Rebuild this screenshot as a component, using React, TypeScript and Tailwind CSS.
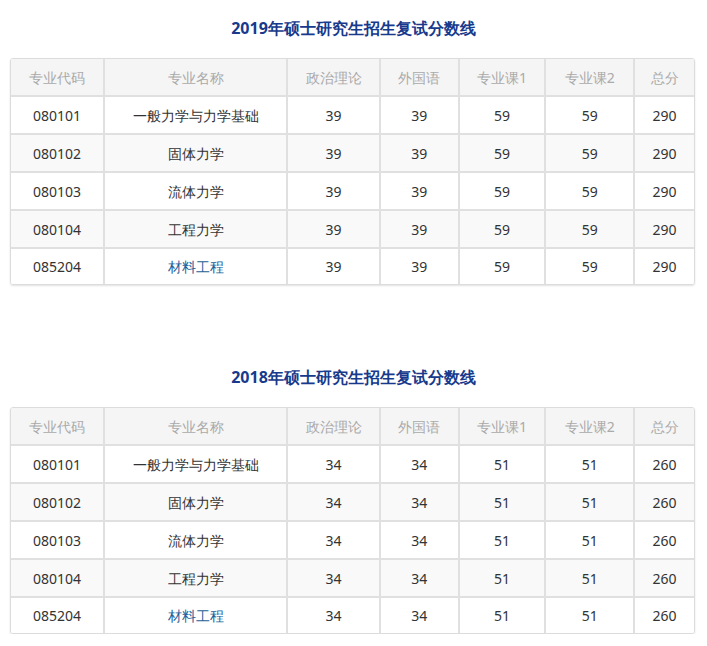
const cols = ["专业代码", "专业名称", "政治理论", "外国语", "专业课1", "专业课2", "总分"];
const widths = ["w-[93px]", "w-[184px]", "w-[93px]", "w-[79px]", "w-[87px]", "w-[89px]", "w-[60px]"];
const majors = [
  ["080101", "一般力学与力学基础"],
  ["080102", "固体力学"],
  ["080103", "流体力学"],
  ["080104", "工程力学"],
  ["085204", "材料工程"],
];

function ScoreTable({ title, s }: { title: string; s: string[] }) {
  return (
    <div>
      <h2 className="h-[58px] pt-[16px] text-center text-[16px] font-bold text-[#173a8c]">{title}</h2>
      <div className="ml-[10px] w-[685px] overflow-hidden rounded-[3px] border border-[#dcdcdc] shadow-[0_1px_2px_rgba(0,0,0,0.12)]">
        <table className="w-full border-collapse text-[14px]">
          <thead>
            <tr className="h-[37px] bg-[#f5f5f5] text-[#aaa]">
              {cols.map((c, i) => (
                <th key={c} className={`${widths[i]} border-2 border-t-0 border-[#e0e0e0] font-normal first:border-l-0 last:border-r-0`}>{c}</th>
              ))}
            </tr>
          </thead>
          <tbody>
            {majors.map(([code, name], r) => (
              <tr key={code} className={`${r === 4 ? "h-[36px]" : "h-[38px]"} text-[#333] ${r % 2 ? "bg-[#f9f9f9]" : "bg-white"}`}>
                {[code, name, ...s].map((v, i) => (
                  <td
                    key={i}
                    className={`border-2 border-[#e0e0e0] text-center first:border-l-0 last:border-r-0 ${r === 4 ? "border-b-0" : ""} ${i === 1 && r === 4 ? "text-[#1f5f99]" : ""}`}
                  >
                    {v}
                  </td>
                ))}
              </tr>
            ))}
          </tbody>
        </table>
      </div>
    </div>
  );
}

export default function App() {
  return (
    <div className="w-[707px] bg-white font-['Open_Sans','Noto_Sans_CJK_SC',sans-serif]">
      <ScoreTable title="2019年硕士研究生招生复试分数线" s={["39", "39", "59", "59", "290"]} />
      <div className="h-[64px]" />
      <ScoreTable title="2018年硕士研究生招生复试分数线" s={["34", "34", "51", "51", "260"]} />
    </div>
  );
}
